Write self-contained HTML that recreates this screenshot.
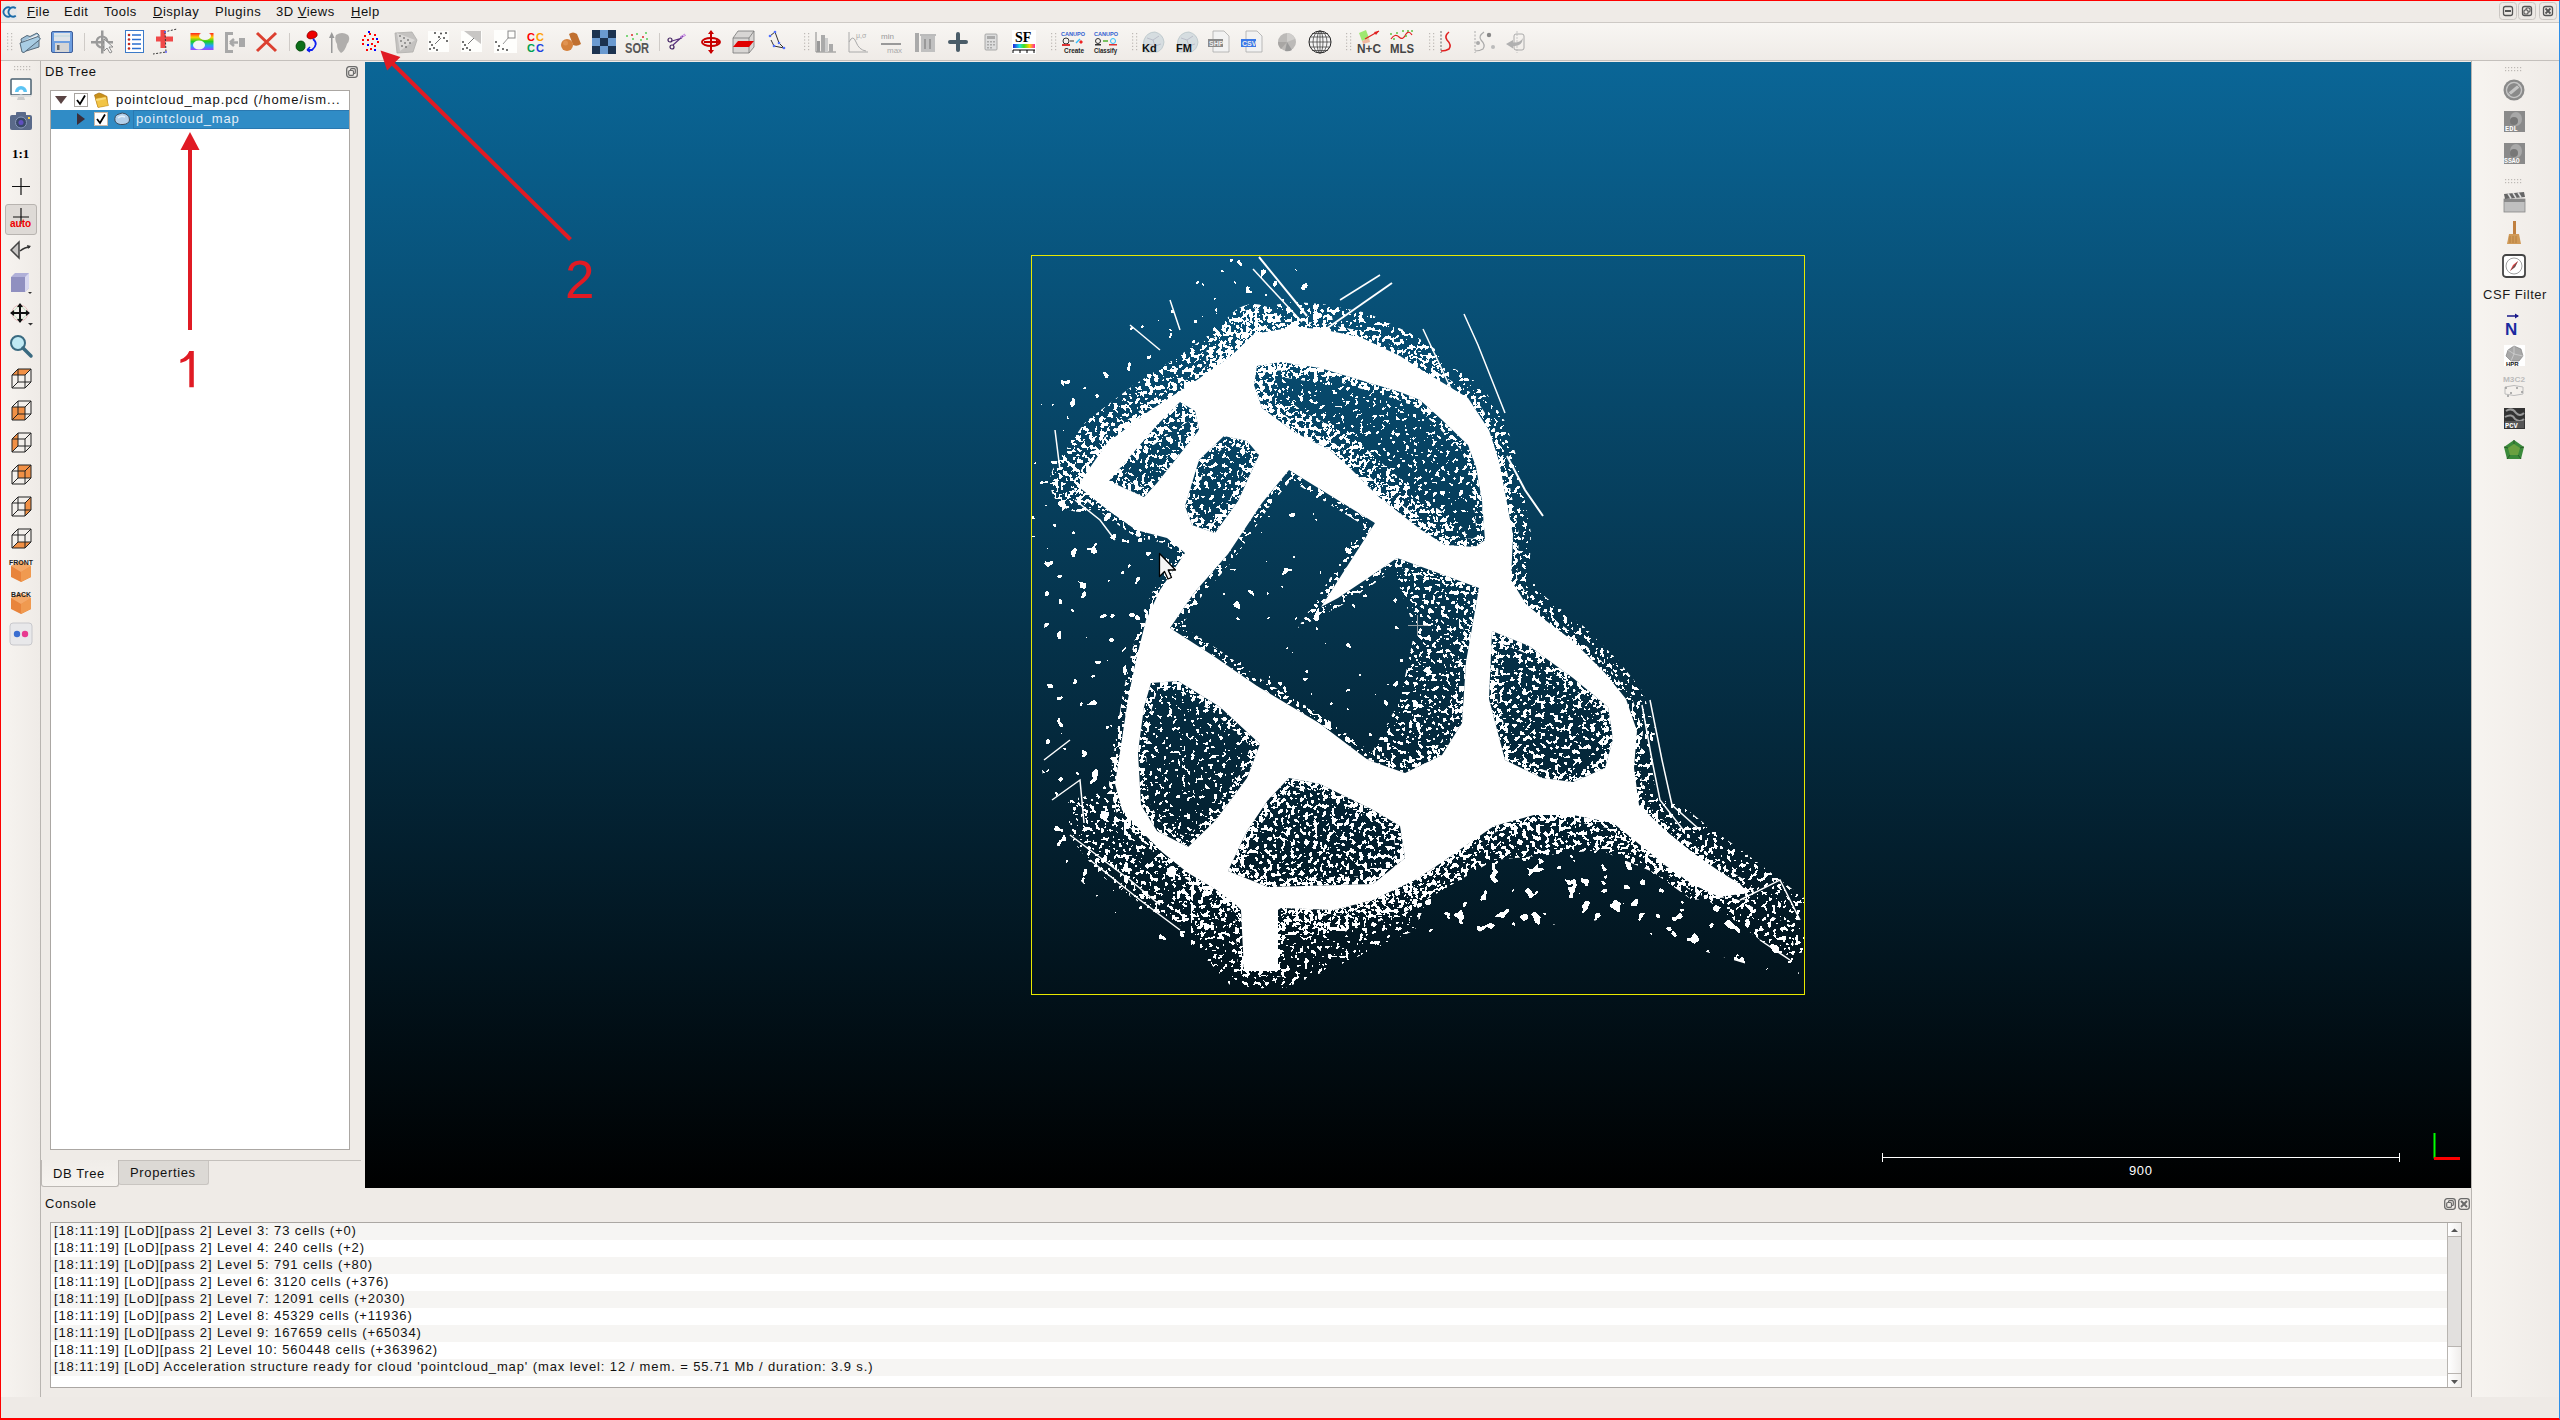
<!DOCTYPE html><html><head><meta charset="utf-8"><style>
*{margin:0;padding:0;box-sizing:border-box}
html,body{width:2560px;height:1420px;overflow:hidden;background:#efebe7;font-family:"Liberation Sans",sans-serif;font-size:13px;color:#111}
.a{position:absolute}
#frame{left:0;top:0;width:2560px;height:1420px;border-top:1px solid #ff0000;border-left:1px solid #ff0000;border-bottom:2px solid #ff0000;border-right:1px solid #2f8fe8;pointer-events:none;z-index:50}
#menubar{left:1px;top:1px;width:2558px;height:22px;background:#efebe7;border-bottom:1px solid #cdc9c5}
.menu{top:4px;font-size:13px;letter-spacing:0.5px;color:#111}
#toolbar{left:1px;top:23px;width:2558px;height:38px;background:linear-gradient(#f8f6f3,#efebe7);border-bottom:1px solid #c4c0bc}
#ltool{left:1px;top:61px;width:39px;height:1336px;background:linear-gradient(90deg,#f7f4f0,#efebe7)}
#lsep{left:40px;top:61px;width:1px;height:1336px;background:#b9b5b1}
#rtool{left:2472px;top:61px;width:87px;height:1336px;background:linear-gradient(90deg,#f7f4f0,#efebe7)}
#rsep{left:2471px;top:61px;width:1px;height:1336px;background:#b9b5b1}
#view{left:365px;top:62px;width:2106px;height:1126px;background:linear-gradient(#0a6697,#000000);overflow:hidden}
#tree{left:50px;top:90px;width:300px;height:1060px;background:#fff;border:1px solid #aba7a3}
#console{left:50px;top:1222px;width:2412px;height:166px;background:#fff;border:1px solid #aba7a3;overflow:hidden}
.row{position:absolute;left:0;width:2396px;height:17px}
.ctext{position:absolute;left:3px;top:0px;white-space:pre;font-size:13px;color:#111}
#status{left:1px;top:1397px;width:2558px;height:21px;background:#eeeae6}
.dockbtn{width:11px;height:11px;border:1.3px solid #6a6a6a;border-radius:2.5px}
</style></head><body><div id="frame" class="a"></div><div id="menubar" class="a"></div><div id="toolbar" class="a"></div><div id="ltool" class="a"></div><div id="lsep" class="a"></div><div id="rtool" class="a"></div><div id="rsep" class="a"></div><div id="status" class="a"></div>
<div class="a menu" style="left:27px"><u>F</u>ile</div>
<div class="a menu" style="left:64px">Edit</div>
<div class="a menu" style="left:104px">Tools</div>
<div class="a menu" style="left:153px"><u>D</u>isplay</div>
<div class="a menu" style="left:215px">Plugins</div>
<div class="a menu" style="left:276px">3D <u>V</u>iews</div>
<div class="a menu" style="left:351px"><u>H</u>elp</div>
<div class="a" style="left:2px;top:4px;width:15px;height:16px;background:#e6e8ea"></div>
<svg class="a" style="left:2px;top:4px" width="16" height="16" viewBox="0 0 16 16"><path d="M8.8 4.2 A4.6 4.6 0 1 0 8.8 11.8" fill="none" stroke="#1a6aa8" stroke-width="1.8"/><path d="M13.8 4.2 A4.6 4.6 0 1 0 13.8 11.8" fill="none" stroke="#1a6aa8" stroke-width="1.8"/></svg>
<svg class="a" style="left:2496px;top:1px" width="63" height="20" viewBox="2496 1 63 20">
 <rect x="2499.5" y="2.5" width="17" height="17" rx="3" fill="#ede9e5" stroke="#cbc7c3"/>
 <rect x="2503.5" y="6.5" width="9" height="9" rx="2" fill="none" stroke="#555" stroke-width="1.3"/><rect x="2505" y="10" width="6" height="2" fill="#555"/>
 <rect x="2518.5" y="2.5" width="17" height="17" rx="3" fill="#ede9e5" stroke="#cbc7c3"/>
 <rect x="2522.5" y="6.5" width="9" height="9" rx="2" fill="none" stroke="#555" stroke-width="1.3"/><rect x="2526" y="8" width="4" height="4" rx="1" fill="none" stroke="#555" stroke-width="1.1"/><rect x="2524" y="10" width="4" height="4" rx="1" fill="#ede9e5" stroke="#555" stroke-width="1.1"/>
 <rect x="2539.5" y="2.5" width="17" height="17" rx="3" fill="#ede9e5" stroke="#cbc7c3"/>
 <rect x="2543.5" y="6.5" width="9" height="9" rx="2" fill="none" stroke="#555" stroke-width="1.3"/><path d="M2545.5 8.5L2550.5 13.5M2550.5 8.5L2545.5 13.5" stroke="#555" stroke-width="1.8"/>
</svg>
<svg class="a" style="left:0;top:0;z-index:3" width="1540" height="62" viewBox="0 0 1540 62"><rect x="7" y="33.0" width="1.2" height="1.2" fill="#bdb9b5"/><rect x="7" y="36.2" width="1.2" height="1.2" fill="#bdb9b5"/><rect x="7" y="39.4" width="1.2" height="1.2" fill="#bdb9b5"/><rect x="7" y="42.6" width="1.2" height="1.2" fill="#bdb9b5"/><rect x="7" y="45.8" width="1.2" height="1.2" fill="#bdb9b5"/><rect x="7" y="49.0" width="1.2" height="1.2" fill="#bdb9b5"/><rect x="11" y="33.0" width="1.2" height="1.2" fill="#bdb9b5"/><rect x="11" y="36.2" width="1.2" height="1.2" fill="#bdb9b5"/><rect x="11" y="39.4" width="1.2" height="1.2" fill="#bdb9b5"/><rect x="11" y="42.6" width="1.2" height="1.2" fill="#bdb9b5"/><rect x="11" y="45.8" width="1.2" height="1.2" fill="#bdb9b5"/><rect x="11" y="49.0" width="1.2" height="1.2" fill="#bdb9b5"/><rect x="804" y="33.0" width="1.2" height="1.2" fill="#bdb9b5"/><rect x="804" y="36.2" width="1.2" height="1.2" fill="#bdb9b5"/><rect x="804" y="39.4" width="1.2" height="1.2" fill="#bdb9b5"/><rect x="804" y="42.6" width="1.2" height="1.2" fill="#bdb9b5"/><rect x="804" y="45.8" width="1.2" height="1.2" fill="#bdb9b5"/><rect x="804" y="49.0" width="1.2" height="1.2" fill="#bdb9b5"/><rect x="808" y="33.0" width="1.2" height="1.2" fill="#bdb9b5"/><rect x="808" y="36.2" width="1.2" height="1.2" fill="#bdb9b5"/><rect x="808" y="39.4" width="1.2" height="1.2" fill="#bdb9b5"/><rect x="808" y="42.6" width="1.2" height="1.2" fill="#bdb9b5"/><rect x="808" y="45.8" width="1.2" height="1.2" fill="#bdb9b5"/><rect x="808" y="49.0" width="1.2" height="1.2" fill="#bdb9b5"/><rect x="1051" y="33.0" width="1.2" height="1.2" fill="#bdb9b5"/><rect x="1051" y="36.2" width="1.2" height="1.2" fill="#bdb9b5"/><rect x="1051" y="39.4" width="1.2" height="1.2" fill="#bdb9b5"/><rect x="1051" y="42.6" width="1.2" height="1.2" fill="#bdb9b5"/><rect x="1051" y="45.8" width="1.2" height="1.2" fill="#bdb9b5"/><rect x="1051" y="49.0" width="1.2" height="1.2" fill="#bdb9b5"/><rect x="1055" y="33.0" width="1.2" height="1.2" fill="#bdb9b5"/><rect x="1055" y="36.2" width="1.2" height="1.2" fill="#bdb9b5"/><rect x="1055" y="39.4" width="1.2" height="1.2" fill="#bdb9b5"/><rect x="1055" y="42.6" width="1.2" height="1.2" fill="#bdb9b5"/><rect x="1055" y="45.8" width="1.2" height="1.2" fill="#bdb9b5"/><rect x="1055" y="49.0" width="1.2" height="1.2" fill="#bdb9b5"/><rect x="1132" y="33.0" width="1.2" height="1.2" fill="#bdb9b5"/><rect x="1132" y="36.2" width="1.2" height="1.2" fill="#bdb9b5"/><rect x="1132" y="39.4" width="1.2" height="1.2" fill="#bdb9b5"/><rect x="1132" y="42.6" width="1.2" height="1.2" fill="#bdb9b5"/><rect x="1132" y="45.8" width="1.2" height="1.2" fill="#bdb9b5"/><rect x="1132" y="49.0" width="1.2" height="1.2" fill="#bdb9b5"/><rect x="1136" y="33.0" width="1.2" height="1.2" fill="#bdb9b5"/><rect x="1136" y="36.2" width="1.2" height="1.2" fill="#bdb9b5"/><rect x="1136" y="39.4" width="1.2" height="1.2" fill="#bdb9b5"/><rect x="1136" y="42.6" width="1.2" height="1.2" fill="#bdb9b5"/><rect x="1136" y="45.8" width="1.2" height="1.2" fill="#bdb9b5"/><rect x="1136" y="49.0" width="1.2" height="1.2" fill="#bdb9b5"/><rect x="1346" y="33.0" width="1.2" height="1.2" fill="#bdb9b5"/><rect x="1346" y="36.2" width="1.2" height="1.2" fill="#bdb9b5"/><rect x="1346" y="39.4" width="1.2" height="1.2" fill="#bdb9b5"/><rect x="1346" y="42.6" width="1.2" height="1.2" fill="#bdb9b5"/><rect x="1346" y="45.8" width="1.2" height="1.2" fill="#bdb9b5"/><rect x="1346" y="49.0" width="1.2" height="1.2" fill="#bdb9b5"/><rect x="1350" y="33.0" width="1.2" height="1.2" fill="#bdb9b5"/><rect x="1350" y="36.2" width="1.2" height="1.2" fill="#bdb9b5"/><rect x="1350" y="39.4" width="1.2" height="1.2" fill="#bdb9b5"/><rect x="1350" y="42.6" width="1.2" height="1.2" fill="#bdb9b5"/><rect x="1350" y="45.8" width="1.2" height="1.2" fill="#bdb9b5"/><rect x="1350" y="49.0" width="1.2" height="1.2" fill="#bdb9b5"/><rect x="1429" y="33.0" width="1.2" height="1.2" fill="#bdb9b5"/><rect x="1429" y="36.2" width="1.2" height="1.2" fill="#bdb9b5"/><rect x="1429" y="39.4" width="1.2" height="1.2" fill="#bdb9b5"/><rect x="1429" y="42.6" width="1.2" height="1.2" fill="#bdb9b5"/><rect x="1429" y="45.8" width="1.2" height="1.2" fill="#bdb9b5"/><rect x="1429" y="49.0" width="1.2" height="1.2" fill="#bdb9b5"/><rect x="1433" y="33.0" width="1.2" height="1.2" fill="#bdb9b5"/><rect x="1433" y="36.2" width="1.2" height="1.2" fill="#bdb9b5"/><rect x="1433" y="39.4" width="1.2" height="1.2" fill="#bdb9b5"/><rect x="1433" y="42.6" width="1.2" height="1.2" fill="#bdb9b5"/><rect x="1433" y="45.8" width="1.2" height="1.2" fill="#bdb9b5"/><rect x="1433" y="49.0" width="1.2" height="1.2" fill="#bdb9b5"/><rect x="84" y="33" width="1" height="18" fill="#cfcbc7"/><rect x="289" y="33" width="1" height="18" fill="#cfcbc7"/><rect x="659" y="33" width="1" height="18" fill="#cfcbc7"/><g transform="translate(18,30)"><path d="M3 9 L9 5.5 L12 6.5 L19 3 L21 5 L21 17 L5 22 Z" fill="#9dbfd6" stroke="#55697a" stroke-width="1"/><path d="M6 11 L19 4.5 L20.5 8 L8 14 Z" fill="#f2f2f2"/><path d="M2 13 L20 6.5 L22.5 9 L6 22.5 L4 22 Z" fill="#a9cde4" stroke="#55697a" stroke-width="1"/></g><g transform="translate(50,30)"><rect x="1.5" y="1.5" width="21" height="21" rx="1.5" fill="#6d9ee0" stroke="#3f5f9a" stroke-width="1"/><rect x="4" y="3" width="16" height="8" fill="#dfe3e8"/><rect x="4" y="5.5" width="16" height="1" fill="#b8d8e0"/><rect x="5" y="13" width="14" height="9" fill="#d5d5d5"/><rect x="7" y="15" width="2.5" height="5" fill="#666"/></g><g transform="translate(91,30)"><circle cx="11" cy="12" r="5.5" fill="none" stroke="#9a9a9a" stroke-width="2.2"/><rect x="10" y="0.5" width="2.5" height="23" fill="#9a9a9a"/><rect x="0" y="11" width="22" height="2.5" fill="#9a9a9a"/><path d="M13 9 L13 21 L16 18 L19 23 L21 22 L18 17 L22 17 Z" fill="#f4f4f4" stroke="#777" stroke-width="0.8"/></g><g transform="translate(124,30)"><rect x="1.5" y="0.5" width="18" height="22" fill="#fff" stroke="#3c7ac8" stroke-width="1"/><g fill="#c0281e"><circle cx="5" cy="5" r="1.3"/><circle cx="5" cy="9.5" r="1.3"/><circle cx="5" cy="14" r="1.3"/><circle cx="5" cy="18.5" r="1.3"/></g><g stroke="#2a6fd0" stroke-width="1.5"><path d="M8 5H17M8 9.5H17M8 14H17M8 18.5H17"/></g></g><g transform="translate(156,30)"><rect x="4.5" y="0" width="5" height="18" fill="#f04848"/><rect x="0" y="6.5" width="17" height="5" fill="#f04848"/><path d="M8 2 L21 -1 M9 2 L10 22 L-3 24" fill="none" stroke="#333" stroke-width="1" stroke-dasharray="2 1.5"/><circle cx="9" cy="2" r="1" fill="#66f"/><circle cx="10" cy="22" r="1" fill="#66f"/></g><g transform="translate(190,30)"><defs><linearGradient id="rb" x1="0" y1="0" x2="0" y2="1"><stop offset="0" stop-color="#ff2020"/><stop offset=".25" stop-color="#ffd000"/><stop offset=".5" stop-color="#20d020"/><stop offset=".75" stop-color="#20a0ff"/><stop offset="1" stop-color="#a040ff"/></linearGradient></defs><rect x="0.5" y="3" width="23" height="17" fill="url(#rb)"/><ellipse cx="15" cy="6" rx="6" ry="4" fill="#f4f4f4"/><ellipse cx="9" cy="15" rx="6" ry="4.5" fill="#f4f4f4"/></g><g transform="translate(224,30)"><path d="M1 2H9V5H4V20H9V23H1Z" fill="#a8a8a8"/><rect x="15" y="8" width="6" height="9" fill="#a8a8a8"/><path d="M6 12.5H14M6 12.5L10 9M6 12.5L10 16" stroke="#a8a8a8" stroke-width="2.5" fill="none"/></g><g transform="translate(255,30)"><path d="M2 3L21 21M21 3L2 21" stroke="#dc4030" stroke-width="3" fill="none"/></g><g transform="translate(295,30)"><path d="M1 15 Q3 10 7 11 Q11 12 10 18 Q8 22 4 21 Q0 19 1 15Z" fill="#0c6e18" stroke="#053a0a" stroke-width="0.6"/><path d="M12 5 Q14 0 19 1 Q23 2 22 6 Q20 9 15 9 Q11 8 12 5Z" fill="#ee0000" stroke="#600" stroke-width="0.6"/><path d="M18 9 Q24 14 17 20 L12 20" fill="none" stroke="#1020f0" stroke-width="1.8"/><path d="M12 20 L15 17 M12 20 L15 22" stroke="#1020f0" stroke-width="1.5"/></g><g transform="translate(329,30)"><rect x="2" y="4" width="1.5" height="19" fill="#999"/><path d="M0 8 L2.7 2 L5.5 8Z" fill="#999"/><path d="M7 5 Q13 1 19 5 Q22 9 18 14 Q16 21 12 23 Q8 20 8 14 Q5 9 7 5Z" fill="#b0aeac"/></g><g transform="translate(361,30)"><g fill="#ff0000"><rect x="3" y="5" width="2" height="2"/><rect x="8" y="3" width="2" height="2"/><rect x="13" y="4" width="2" height="2"/><rect x="1" y="9" width="2" height="2"/><rect x="6" y="9" width="2" height="2"/><rect x="11" y="8" width="2" height="2"/><rect x="16" y="11" width="2" height="2"/><rect x="1" y="13" width="2" height="2"/><rect x="10" y="13" width="2" height="2"/><rect x="13" y="15" width="2" height="2"/><rect x="5" y="19" width="2" height="2"/><rect x="9" y="18" width="2" height="2"/></g><g fill="#0000ff"><rect x="7" y="1" width="2" height="2"/><rect x="15" y="8" width="2" height="2"/><rect x="6" y="14" width="2" height="2"/><rect x="13" y="19" width="2" height="2"/></g></g><g transform="translate(395,30)"><path d="M0 3 L17 2 L22 10 L18 22 L2 23 Z" fill="#c4c2c0" stroke="#b0aeac" stroke-width="0.8"/><path d="M2 3 L20 10 L5 21" fill="#dcdad8"/><g fill="#444"><circle cx="5" cy="6" r=".8"/><circle cx="9" cy="8" r=".8"/><circle cx="13" cy="10" r=".8"/><circle cx="6" cy="11" r=".8"/><circle cx="10" cy="13" r=".8"/><circle cx="15" cy="13" r=".8"/><circle cx="7" cy="16" r=".8"/><circle cx="11" cy="17" r=".8"/></g></g><g transform="translate(428,30)"><rect x="0" y="1" width="21" height="21" fill="#fefefc"/><g fill="#444"><circle cx="7" cy="3" r="1"/><circle cx="13" cy="3.5" r="1"/><circle cx="18" cy="3" r="1"/><circle cx="11" cy="7" r="1"/><circle cx="16" cy="8" r="1"/><circle cx="19" cy="11" r="1"/><circle cx="2" cy="12" r="1"/><circle cx="4" cy="15" r="1"/><circle cx="2" cy="19" r="1"/><circle cx="6" cy="18" r="1"/><circle cx="9" cy="20" r="1"/></g><path d="M7 14L13 8" stroke="#777" stroke-width="1"/></g><g transform="translate(461,30)"><rect x="0" y="1" width="21" height="21" fill="#fefefc"/><path d="M3 1H20V14Z" fill="#c8c6c4"/><g fill="#444"><circle cx="2" cy="12" r="1"/><circle cx="4" cy="15" r="1"/><circle cx="2" cy="19" r="1"/><circle cx="6" cy="18" r="1"/><circle cx="9" cy="20" r="1"/></g><path d="M7 14L13 8" stroke="#777" stroke-width="1"/></g><g transform="translate(494,30)"><rect x="0" y="0" width="23" height="23" fill="#fefefc"/><rect x="14" y="1" width="7" height="7" fill="none" stroke="#888" stroke-width="1"/><g fill="#444"><circle cx="2" cy="12" r="1"/><circle cx="5" cy="16" r="1"/><circle cx="4" cy="20" r="1"/><circle cx="9" cy="19" r="1"/><circle cx="13" cy="20" r="1"/></g><path d="M9 14L15 7" stroke="#999" stroke-width="1"/></g><g transform="translate(527,30)"><g font-family="Liberation Sans" font-weight="bold" font-size="11"><text x="0" y="11" fill="#ff0000">C</text><text x="9" y="11" fill="#ffa000">C</text><text x="0" y="22" fill="#00a050">C</text><text x="9" y="22" fill="#2040e0">C</text></g></g><g transform="translate(559,30)"><path d="M10 4 Q14 1 18 4 L22 14 Q18 17 14 15Z" fill="#c07030"/><circle cx="8" cy="15" r="6" fill="#d4813c"/><circle cx="6.5" cy="13" r="2.5" fill="#e8a060" opacity=".6"/></g><g transform="translate(592,30)"><rect x="0" y="0" width="24" height="24" fill="#6a9ad0"/><g fill="#1c3350"><rect x="0" y="0" width="8" height="8"/><rect x="16" y="0" width="8" height="8"/><rect x="8" y="8" width="8" height="8"/><rect x="0" y="16" width="8" height="8"/><rect x="16" y="16" width="8" height="8"/></g></g><g transform="translate(625,30)"><text x="0" y="23" font-family="Liberation Sans" font-weight="bold" font-size="14" fill="#555" textLength="24" lengthAdjust="spacingAndGlyphs">SOR</text><g fill="#5c5"><circle cx="2" cy="6" r="1"/><circle cx="12" cy="4" r="1"/><circle cx="21" cy="3" r="1"/><circle cx="8" cy="9" r="1"/><circle cx="16" cy="10" r="1"/><circle cx="22" cy="9" r="1"/></g><g stroke="#d33" stroke-width="0.8"><path d="M6 4l2 2M8 4l-2 2M17 6l2 2M19 6l-2 2"/></g></g><g transform="translate(666,30)"><circle cx="4" cy="10" r="2" fill="none" stroke="#402060" stroke-width="1.2"/><circle cx="6" cy="17" r="2" fill="none" stroke="#402060" stroke-width="1.2"/><path d="M6 11 L16 8 M7 15 L17 6" stroke="#5a3080" stroke-width="1.2"/><path d="M15 8L20 5M14 7 L19 4" stroke="#c080e0" stroke-width="1"/></g><g transform="translate(699,30)"><path d="M12 1V23M5 12H19" stroke="#c80000" stroke-width="2"/><path d="M12 0L9 4H15ZM12 24L9 20H15Z" fill="#c80000"/><ellipse cx="12" cy="12" rx="9" ry="4" fill="none" stroke="#c80000" stroke-width="2"/><path d="M21 12 L17 9 V15Z" fill="#c80000"/></g><g transform="translate(731,30)"><path d="M2 8 L7 1 L23 1 L23 17 L18 23 L2 23 Z" fill="#d8d6d4" stroke="#777" stroke-width="0.8"/><path d="M2 8H18V23M18 8L23 1" fill="none" stroke="#777" stroke-width="0.8"/><path d="M2 17 L7 11 L23 11 L18 17Z" fill="#e00000"/></g><g transform="translate(766,30)"><path d="M4 6 L9 2 L13 13 L18 18 L8 16 L5 10" fill="none" stroke="#333" stroke-width="1"/><g fill="#5070ff"><circle cx="4" cy="6" r="1.3"/><circle cx="9" cy="2" r="1.3"/><circle cx="13" cy="13" r="1.3"/><circle cx="18" cy="18" r="1.3"/><circle cx="8" cy="16" r="1.3"/></g></g><g transform="translate(814,30)"><path d="M2 2V22H22" fill="none" stroke="#888" stroke-width="1"/><rect x="3" y="11" width="3" height="11" fill="#999"/><rect x="7" y="5" width="4" height="17" fill="#aaa"/><rect x="11" y="8" width="3" height="14" fill="#ccc"/><rect x="15" y="14" width="4" height="8" fill="#aaa"/></g><g transform="translate(847,30)"><path d="M2 2V22H21" fill="none" stroke="#aaa" stroke-width="1"/><path d="M2 12 Q6 4 9 12 Q12 20 19 21" fill="none" stroke="#aaa" stroke-width="1"/><text x="9" y="8" font-size="7" fill="#aaa" font-family="Liberation Sans">μ,σ</text></g><g transform="translate(880,30)"><text x="1" y="9" font-size="8" fill="#999" font-family="Liberation Sans">min</text><text x="7" y="23" font-size="8" fill="#aaa" font-family="Liberation Sans">max</text><path d="M1 14H21" stroke="#999" stroke-width="2"/></g><g transform="translate(914,30)"><rect x="1" y="3" width="4" height="19" fill="#aaa"/><path d="M6 4H22V6H6Z" fill="#bbb"/><rect x="7" y="6" width="14" height="16" fill="#c0c0c0"/><rect x="10" y="9" width="2" height="10" fill="#999"/><rect x="15" y="9" width="2" height="10" fill="#999"/></g><g transform="translate(946,30)"><path d="M12 4V20M4 12H20" stroke="#4a5c68" stroke-width="4" stroke-linecap="round"/></g><g transform="translate(979,30)"><rect x="6" y="4" width="12" height="16" rx="1" fill="#ddd" stroke="#999" stroke-width="0.8"/><rect x="8" y="6" width="8" height="3" fill="#aaa"/><g fill="#aaa"><rect x="8" y="11" width="2" height="1.5"/><rect x="11" y="11" width="2" height="1.5"/><rect x="14" y="11" width="2" height="1.5"/><rect x="8" y="14" width="2" height="1.5"/><rect x="11" y="14" width="2" height="1.5"/><rect x="14" y="14" width="2" height="1.5"/><rect x="8" y="17" width="2" height="1.5"/><rect x="11" y="17" width="2" height="1.5"/></g></g><g transform="translate(1012,30)"><defs><linearGradient id="sfg"><stop offset="0" stop-color="#2020e0"/><stop offset=".3" stop-color="#20e0e0"/><stop offset=".5" stop-color="#40e020"/><stop offset=".75" stop-color="#ffd000"/><stop offset="1" stop-color="#ff20a0"/></linearGradient></defs><rect x="0" y="0" width="24" height="24" fill="#fff"/><text x="3" y="12" font-family="Liberation Serif" font-weight="bold" font-size="14" fill="#000">SF</text><rect x="1" y="14" width="22" height="4" fill="url(#sfg)"/><path d="M1 20H23M1 20V23M8 20V23M15 20V23M22 20V23" stroke="#000" stroke-width="1"/></g><g transform="translate(1061,30)"><text x="0" y="6" font-family="Liberation Sans" font-weight="bold" font-size="6" fill="#3060d0" textLength="24" lengthAdjust="spacingAndGlyphs">CANUPO</text><circle cx="5" cy="11" r="3" fill="none" stroke="#333" stroke-width="1"/><path d="M9 11H13" stroke="#333"/><path d="M15 13 L19 9" stroke="#30c0ff" stroke-width="1.5"/><path d="M20 10 L22 12 L20 14 L18 12Z" fill="#e22"/><rect x="1" y="14" width="8" height="2" fill="#d33"/><text x="3" y="23" font-family="Liberation Sans" font-weight="bold" font-size="7" fill="#222" textLength="20" lengthAdjust="spacingAndGlyphs">Create</text></g><g transform="translate(1094,30)"><text x="0" y="6" font-family="Liberation Sans" font-weight="bold" font-size="6" fill="#3060d0" textLength="24" lengthAdjust="spacingAndGlyphs">CANUPO</text><circle cx="4" cy="11" r="2.5" fill="none" stroke="#333" stroke-width="1"/><path d="M9 11H14" stroke="#50b030" stroke-width="1.5"/><circle cx="19" cy="11" r="2.5" fill="none" stroke="#30c0ff" stroke-width="1"/><rect x="15" y="14" width="8" height="1.5" fill="#d33"/><rect x="1" y="14" width="6" height="1.5" fill="#333"/><text x="0" y="23" font-family="Liberation Sans" font-weight="bold" font-size="7" fill="#222" textLength="23" lengthAdjust="spacingAndGlyphs">Classify</text></g><g transform="translate(1141,30)"><path d="M3 10 Q6 2 14 2 Q22 4 23 12 Q22 20 16 22 L4 22 Q1 16 3 10Z" fill="#d6dde0" stroke="#b8c4c8" stroke-width="0.8"/><path d="M6 8L12 10L18 6M12 10L14 16L20 14M8 14L14 16" fill="none" stroke="#aab" stroke-width="0.6"/><text x="1" y="22" font-family="Liberation Sans" font-weight="bold" font-size="11" fill="#111">Kd</text></g><g transform="translate(1175,30)"><path d="M3 10 Q6 2 14 2 Q22 4 23 12 Q22 20 16 22 L4 22 Q1 16 3 10Z" fill="#d6dde0" stroke="#b8c4c8" stroke-width="0.8"/><path d="M6 8L12 10L18 6M12 10L14 16L20 14M8 14L14 16" fill="none" stroke="#aab" stroke-width="0.6"/><text x="1" y="22" font-family="Liberation Sans" font-weight="bold" font-size="11" fill="#111">FM</text></g><g transform="translate(1208,30)"><path d="M5 1 H16 L21 6 V22 H5 Z" fill="#f2f2f2" stroke="#aaa" stroke-width="0.8"/><rect x="0" y="9" width="15" height="8" fill="#8a8a8a"/><text x="1" y="16" font-family="Liberation Sans" font-weight="bold" font-size="7" fill="#eee">SHP</text></g><g transform="translate(1241,30)"><path d="M5 1 H16 L21 6 V22 H5 Z" fill="#f2f2f2" stroke="#aaa" stroke-width="0.8"/><rect x="0" y="9" width="15" height="8" fill="#3a78e8"/><text x="1" y="16" font-family="Liberation Sans" font-weight="bold" font-size="7" fill="#eee">CSV</text></g><g transform="translate(1275,30)"><circle cx="12" cy="12" r="9" fill="#bcbab8"/><path d="M12 12L12 3A9 9 0 0 1 20 9Z" fill="#d0cecc"/><path d="M12 12L6 19A9 9 0 0 1 3 12Z" fill="#a8a6a4"/><path d="M12 12L17 20A9 9 0 0 1 10 21Z" fill="#999"/></g><g transform="translate(1308,30)"><circle cx="12" cy="12" r="11" fill="#f4f4f4" stroke="#222" stroke-width="1"/><g fill="none" stroke="#333" stroke-width="0.7"><ellipse cx="12" cy="12" rx="3" ry="11"/><ellipse cx="12" cy="12" rx="7" ry="11"/><path d="M1 12H23M2 7H22M2 17H22M4 3.5H20M4 20.5H20M12 1V23"/></g></g><g transform="translate(1357,30)"><path d="M2 3 L9 0 L12 8 L5 11Z" fill="#9ee870"/><path d="M5 11 L12 8 L13 12 L6 14Z" fill="#f0b8a0"/><path d="M8 9 L22 1" stroke="#e02020" stroke-width="1.3"/><path d="M22 1 L17 2 L19 5Z" fill="#e02020"/><text x="0" y="23" font-family="Liberation Sans" font-weight="bold" font-size="13" fill="#444" textLength="24" lengthAdjust="spacingAndGlyphs">N+C</text></g><g transform="translate(1390,30)"><path d="M1 9 Q5 3 9 7 Q13 11 16 4 Q19 0 22 5" fill="none" stroke="#e02020" stroke-width="1.2"/><g fill="#60c040"><circle cx="1" cy="4" r="1"/><circle cx="7" cy="3" r="1"/><circle cx="13" cy="1" r="1"/><circle cx="18" cy="1" r="1"/><circle cx="22" cy="1" r="1"/><circle cx="4" cy="9" r="1"/><circle cx="16" cy="6" r="1"/></g><text x="0" y="23" font-family="Liberation Sans" font-weight="bold" font-size="13" fill="#444" textLength="24" lengthAdjust="spacingAndGlyphs">MLS</text></g><g transform="translate(1438,30)"><path d="M3 1V23" stroke="#444" stroke-width="0.8" stroke-dasharray="2 1.5"/><path d="M11 2 Q6 6 9 10 Q14 15 11 19 Q8 21 3 21" fill="none" stroke="#e02020" stroke-width="1.6"/></g><g transform="translate(1472,30)"><path d="M3 1V23" stroke="#999" stroke-width="0.8" stroke-dasharray="2 1.5"/><path d="M12 2 Q6 6 9 10 Q14 15 11 19 Q8 21 3 21" fill="none" stroke="#aaa" stroke-width="1.2"/><circle cx="17" cy="5" r="2.2" fill="#888"/><circle cx="6" cy="13" r="2" fill="#aaa"/><circle cx="21" cy="17" r="2" fill="#bbb"/></g><g transform="translate(1505,30)"><path d="M12 1V23" stroke="#bbb" stroke-width="0.8" stroke-dasharray="2 1"/><rect x="9" y="4" width="10" height="16" rx="2" fill="none" stroke="#aaa" stroke-width="1"/><path d="M1 14 L8 10 V12.5 Q15 13 18 8 Q17 17 8 16 V18.5Z" fill="#b0b0b0"/></g></svg><svg class="a" style="left:0;top:61px;z-index:3" width="41" height="600" viewBox="0 61 41 600"><rect x="14" y="66" width="1.2" height="1.2" fill="#bdb9b5"/><rect x="14" y="69" width="1.2" height="1.2" fill="#bdb9b5"/><rect x="17" y="66" width="1.2" height="1.2" fill="#bdb9b5"/><rect x="17" y="69" width="1.2" height="1.2" fill="#bdb9b5"/><rect x="20" y="66" width="1.2" height="1.2" fill="#bdb9b5"/><rect x="20" y="69" width="1.2" height="1.2" fill="#bdb9b5"/><rect x="23" y="66" width="1.2" height="1.2" fill="#bdb9b5"/><rect x="23" y="69" width="1.2" height="1.2" fill="#bdb9b5"/><rect x="26" y="66" width="1.2" height="1.2" fill="#bdb9b5"/><rect x="26" y="69" width="1.2" height="1.2" fill="#bdb9b5"/><rect x="29" y="66" width="1.2" height="1.2" fill="#bdb9b5"/><rect x="29" y="69" width="1.2" height="1.2" fill="#bdb9b5"/><rect x="5.5" y="204.5" width="31" height="30" rx="2.5" fill="#dedad6" stroke="#b8b4b0" stroke-width="1"/><g transform="translate(9,207)"><path d="M12 1V17M4 10H20" stroke="#111" stroke-width="1.2"/><text x="1" y="20" font-family="Liberation Sans" font-weight="bold" font-size="10" fill="#ee0000">auto</text></g><g transform="translate(9,78)"><rect x="2" y="1" width="20" height="16" rx="1" fill="#fff" stroke="#4a6070" stroke-width="1.5"/><path d="M6 14 A6 6 0 0 1 18 14 Z" fill="#5cc4f4"/><circle cx="12" cy="14" r="2.5" fill="#fff"/><rect x="2" y="17" width="20" height="2" fill="#ddd"/><path d="M9 19H15L16 22H8Z" fill="#ccc"/></g><g transform="translate(9,109)"><rect x="1" y="6" width="22" height="15" rx="2" fill="#5a6a8a"/><rect x="7" y="3" width="10" height="4" rx="1" fill="#5a6a8a"/><circle cx="12" cy="13.5" r="5.5" fill="#3a4a6a" stroke="#8a9aba" stroke-width="1"/><circle cx="12" cy="13.5" r="2.5" fill="#6050c0"/><rect x="19" y="8" width="2" height="2" fill="#ffd040"/></g><g transform="translate(9,141)"><text x="3" y="17" font-family="Liberation Serif" font-weight="bold" font-size="13" fill="#000">1:1</text></g><g transform="translate(9,174)"><path d="M12 4V21M3 12.5H21" stroke="#111" stroke-width="1.2"/></g><g transform="translate(9,238)"><path d="M2 12 L10 4 V20 Z" fill="#c8c6c4" stroke="#444" stroke-width="1.5"/><path d="M11 13 Q16 9 21 9" fill="none" stroke="#333" stroke-width="1.5"/><path d="M22 8 L18 7 L19 11Z" fill="#333"/></g><g transform="translate(9,271)"><path d="M2 6 L6 2 H20 V17 L16 21 H2 Z" fill="#b0b0d8"/><path d="M2 6H16V21H2Z" fill="#9090c0"/><path d="M16 6L20 2V17L16 21Z" fill="#d8d8f0"/><path d="M19 21 L23 21 L21 23Z" fill="#333"/></g><g transform="translate(9,302)"><circle cx="11" cy="11" r="8" fill="none" stroke="#e8c0c0" stroke-width="1"/><circle cx="11" cy="11" r="6" fill="none" stroke="#c0e0c0" stroke-width="1"/><path d="M11 2V20M2 11H20" stroke="#111" stroke-width="2"/><path d="M11 1L8 5H14ZM11 21L8 17H14ZM1 11L5 8V14ZM21 11L17 8V14Z" fill="#111"/><path d="M19 21H24L21.5 23.5Z" fill="#333"/></g><g transform="translate(9,334)"><circle cx="9" cy="9" r="7" fill="#c0eaf4" stroke="#3a6a80" stroke-width="2"/><path d="M14 14 L22 22" stroke="#3a6a80" stroke-width="3.5" stroke-linecap="round"/></g><g transform="translate(9,366)"><g transform="translate(2,2)"><path d="M1 7L7 1H20L14 7Z" fill="#f08a3c" opacity="0.95"/><path d="M1 7H14V20H1Z M7 1H20V14H7Z M1 7L7 1 M14 7L20 1 M14 20L20 14 M1 20L7 14" fill="none" stroke="#222" stroke-width="1"/></g></g><g transform="translate(9,398)"><g transform="translate(2,2)"><path d="M1 7H14V20H1Z" fill="#f08a3c" opacity="0.95"/><path d="M1 7H14V20H1Z M7 1H20V14H7Z M1 7L7 1 M14 7L20 1 M14 20L20 14 M1 20L7 14" fill="none" stroke="#222" stroke-width="1"/></g></g><g transform="translate(9,430)"><g transform="translate(2,2)"><path d="M1 7L7 1V14L1 20Z" fill="#f08a3c" opacity="0.95"/><path d="M1 7H14V20H1Z M7 1H20V14H7Z M1 7L7 1 M14 7L20 1 M14 20L20 14 M1 20L7 14" fill="none" stroke="#222" stroke-width="1"/></g></g><g transform="translate(9,462)"><g transform="translate(2,2)"><path d="M7 1H20V14H7Z" fill="#f08a3c" opacity="0.95"/><path d="M1 7H14V20H1Z M7 1H20V14H7Z M1 7L7 1 M14 7L20 1 M14 20L20 14 M1 20L7 14" fill="none" stroke="#222" stroke-width="1"/></g></g><g transform="translate(9,494)"><g transform="translate(2,2)"><path d="M14 7L20 1V14L14 20Z" fill="#f08a3c" opacity="0.95"/><path d="M1 7H14V20H1Z M7 1H20V14H7Z M1 7L7 1 M14 7L20 1 M14 20L20 14 M1 20L7 14" fill="none" stroke="#222" stroke-width="1"/></g></g><g transform="translate(9,526)"><g transform="translate(2,2)"><path d="M1 20L7 14H20L14 20Z" fill="#f08a3c" opacity="0.95"/><path d="M1 7H14V20H1Z M7 1H20V14H7Z M1 7L7 1 M14 7L20 1 M14 20L20 14 M1 20L7 14" fill="none" stroke="#222" stroke-width="1"/></g></g><g transform="translate(9,558)"><path d="M12 3 L22 8 V19 L12 24 L2 19 V8Z" fill="#e8843c"/><path d="M12 14 L22 8 V19 L12 24Z" fill="#f09a50"/><path d="M2 8 L12 14 L22 8 L12 3Z" fill="#f4a868"/><text x="0" y="7" font-family="Liberation Sans" font-weight="bold" font-size="7" fill="#222" textLength="24" lengthAdjust="spacingAndGlyphs">FRONT</text></g><g transform="translate(9,590)"><path d="M12 3 L22 8 V19 L12 24 L2 19 V8Z" fill="#e8843c"/><path d="M12 14 L22 8 V19 L12 24Z" fill="#f09a50"/><path d="M2 8 L12 14 L22 8 L12 3Z" fill="#f4a868"/><text x="2" y="7" font-family="Liberation Sans" font-weight="bold" font-size="7" fill="#222" textLength="20" lengthAdjust="spacingAndGlyphs">BACK</text></g><g transform="translate(9,622)"><rect x="1" y="1" width="22" height="22" rx="3" fill="#e8e8ea" stroke="#c8c8cc" stroke-width="1"/><circle cx="8" cy="12" r="3.2" fill="#3a6ed0"/><circle cx="16" cy="12" r="3.2" fill="#e83a90"/></g></svg><svg class="a" style="left:2472px;top:61px;z-index:3" width="87" height="420" viewBox="2472 61 87 420"><rect x="2505" y="67" width="1.2" height="1.2" fill="#bdb9b5"/><rect x="2505" y="70" width="1.2" height="1.2" fill="#bdb9b5"/><rect x="2508" y="67" width="1.2" height="1.2" fill="#bdb9b5"/><rect x="2508" y="70" width="1.2" height="1.2" fill="#bdb9b5"/><rect x="2511" y="67" width="1.2" height="1.2" fill="#bdb9b5"/><rect x="2511" y="70" width="1.2" height="1.2" fill="#bdb9b5"/><rect x="2514" y="67" width="1.2" height="1.2" fill="#bdb9b5"/><rect x="2514" y="70" width="1.2" height="1.2" fill="#bdb9b5"/><rect x="2517" y="67" width="1.2" height="1.2" fill="#bdb9b5"/><rect x="2517" y="70" width="1.2" height="1.2" fill="#bdb9b5"/><rect x="2520" y="67" width="1.2" height="1.2" fill="#bdb9b5"/><rect x="2520" y="70" width="1.2" height="1.2" fill="#bdb9b5"/><rect x="2505" y="179" width="1.2" height="1.2" fill="#bdb9b5"/><rect x="2505" y="182" width="1.2" height="1.2" fill="#bdb9b5"/><rect x="2508" y="179" width="1.2" height="1.2" fill="#bdb9b5"/><rect x="2508" y="182" width="1.2" height="1.2" fill="#bdb9b5"/><rect x="2511" y="179" width="1.2" height="1.2" fill="#bdb9b5"/><rect x="2511" y="182" width="1.2" height="1.2" fill="#bdb9b5"/><rect x="2514" y="179" width="1.2" height="1.2" fill="#bdb9b5"/><rect x="2514" y="182" width="1.2" height="1.2" fill="#bdb9b5"/><rect x="2517" y="179" width="1.2" height="1.2" fill="#bdb9b5"/><rect x="2517" y="182" width="1.2" height="1.2" fill="#bdb9b5"/><rect x="2520" y="179" width="1.2" height="1.2" fill="#bdb9b5"/><rect x="2520" y="182" width="1.2" height="1.2" fill="#bdb9b5"/><g transform="translate(2502,78)"><circle cx="12" cy="12" r="10.5" fill="#8a8a8a"/><circle cx="12" cy="12" r="7.5" fill="none" stroke="#c4c4c4" stroke-width="1.5"/><path d="M6 17L18 7" stroke="#c4c4c4" stroke-width="3"/><circle cx="12" cy="12" r="6" fill="none" stroke="#8a8a8a" stroke-width="1"/></g><g transform="translate(2502,110)"><rect x="2" y="1" width="21" height="21" fill="#8a8a8a"/><ellipse cx="14" cy="9" rx="6" ry="7" fill="#a8a8a8"/><ellipse cx="12" cy="11" rx="4" ry="4" fill="#777"/><text x="3" y="21" font-family="Liberation Mono" font-weight="bold" font-size="7" fill="#fff">EDL</text></g><g transform="translate(2502,142)"><rect x="2" y="1" width="21" height="21" fill="#8a8a8a"/><ellipse cx="14" cy="9" rx="6" ry="7" fill="#a8a8a8"/><ellipse cx="12" cy="11" rx="4" ry="4" fill="#777"/><text x="2" y="21" font-family="Liberation Mono" font-weight="bold" font-size="6.5" fill="#fff">SSAO</text></g><g transform="translate(2502,190)"><rect x="2" y="9" width="21" height="13" fill="#c0c0c0" stroke="#888" stroke-width="0.8"/><path d="M2 4 L22 2 L23 7 L3 9Z" fill="#666"/><path d="M6 3.5L9 8.5M11 3L14 8M16 2.5L19 7.5" stroke="#ddd" stroke-width="1.5"/><rect x="2" y="9" width="21" height="3" fill="#888"/></g><g transform="translate(2502,221)"><rect x="11" y="0" width="3" height="13" fill="#c08040"/><path d="M7 13 H17 L19 23 H5Z" fill="#d09a58"/><path d="M8 15V22M11 15V22M14 15V22" stroke="#b07838" stroke-width="0.8"/></g><g transform="translate(2502,254)"><rect x="1" y="1" width="22" height="22" rx="3" fill="#fff" stroke="#444" stroke-width="1.8"/><circle cx="12" cy="12" r="8" fill="none" stroke="#888" stroke-width="0.8"/><path d="M16 7 L11 11 L8 17 L13 13Z" fill="#e04040"/><path d="M16 7 L13 13 L8 17" fill="#555"/></g><g transform="translate(2502,313)"><path d="M5 3H16" stroke="#1a1a8a" stroke-width="1.5"/><path d="M17 3L13 0.5V5.5Z" fill="#1a1a8a"/><text x="3" y="22" font-family="Liberation Sans" font-weight="bold" font-size="17" fill="#1a2aa0">N</text></g><g transform="translate(2502,344)"><rect x="2" y="1" width="21" height="21" fill="#fff"/><path d="M6 6 L12 2 L19 5 L21 12 L17 17 L9 17 L4 12Z" fill="#a8a8a8" stroke="#777" stroke-width="0.6"/><path d="M12 2V10L6 6M12 10L21 12M12 10L9 17" stroke="#ddd" stroke-width="0.6" fill="none"/><text x="4" y="22" font-family="Liberation Sans" font-weight="bold" font-size="6" fill="#111">HPR</text></g><g transform="translate(2502,375)"><text x="1" y="7" font-family="Liberation Sans" font-weight="bold" font-size="7.5" fill="#bbb" textLength="22" lengthAdjust="spacingAndGlyphs">M3C2</text><path d="M3 12 Q12 9 21 12 L21 19 Q12 22 3 19Z" fill="none" stroke="#bbb" stroke-width="1"/><g fill="#999"><circle cx="4" cy="13" r="1"/><circle cx="9" cy="18" r="1"/><circle cx="15" cy="13" r="1"/><circle cx="20" cy="17" r="1"/><circle cx="6" cy="21" r="1"/></g></g><g transform="translate(2502,407)"><rect x="2" y="1" width="21" height="21" fill="#333"/><path d="M4 4 Q10 0 14 6 Q18 10 22 6 M3 10 Q10 6 13 12 Q18 16 22 12" stroke="#999" stroke-width="2" fill="none"/><rect x="3" y="14" width="19" height="7" fill="#555"/><text x="3" y="21" font-family="Liberation Mono" font-weight="bold" font-size="7" fill="#fff">PCV</text></g><g transform="translate(2502,439)"><path d="M12 1 L22 8 L19 20 L5 20 L2 8Z" fill="#3a8a3a"/><path d="M12 5 L18 9 L16 16 L8 16 L6 9Z" fill="#6aa040"/><path d="M12 1V5M22 8L18 9M19 20L16 16M5 20L8 16M2 8L6 9" stroke="#2a5a2a" stroke-width="1"/></g></svg><div class="a" style="left:2483px;top:287px;font-size:13px;letter-spacing:0.55px;color:#1a1a1a;z-index:3">CSF Filter</div><div class="a" style="left:45px;top:64px;font-size:13px;letter-spacing:0.55px">DB Tree</div><svg class="a" style="left:346px;top:66px" width="12" height="12" viewBox="0 0 12 12"><rect x="0.7" y="0.7" width="10.6" height="10.6" rx="2.5" fill="none" stroke="#6a6a6a" stroke-width="1.3"/><rect x="4.5" y="2.7" width="4.8" height="4.8" rx="1" fill="none" stroke="#6a6a6a" stroke-width="1.2"/><rect x="2.7" y="4.5" width="4.8" height="4.8" rx="1" fill="#efebe7" stroke="#6a6a6a" stroke-width="1.2"/></svg><div id="tree" class="a"><svg class="a" style="left:0;top:0" width="80" height="40" viewBox="51 91 80 40"><path d="M55 96H67L61 104Z" fill="#5a4444"/><rect x="74.5" y="93.5" width="13" height="13" fill="#fff" stroke="#a8a4a0"/><path d="M77 100 L80 104 L85 95.5" fill="none" stroke="#000" stroke-width="1.8"/><path d="M94.5 95 L99 93 L102 94 L107 96.5 L107.5 105 L98 107 Z" fill="#c8901a" stroke="#a87010" stroke-width="0.7"/><path d="M95.5 98.5 L106 96.5 L108.5 105.5 L98 107.5 Z" fill="#f2c445" stroke="#c89020" stroke-width="0.6"/><path d="M96 99 L105.5 97.2 L106 99 L96.5 101Z" fill="#f8dc80"/></svg><div class="a" style="left:65px;top:1px;font-size:13px;letter-spacing:0.92px;white-space:pre;color:#111">pointcloud_map.pcd (/home/ism...</div><div class="a" style="left:0;top:19px;width:298px;height:19px;background:#308cc6"></div><div class="a" style="left:82px;top:19px;width:216px;height:19px;border:1px solid #2a78b0;border-right:none"></div><svg class="a" style="left:0;top:19px" width="100" height="19" viewBox="51 110 100 19"><path d="M77 113L85 119L77 125Z" fill="#3a2e3a"/><rect x="94.5" y="112.5" width="13" height="13" fill="#fff" stroke="#c8b8a8"/><path d="M97 119 L100 123 L105 114.5" fill="none" stroke="#000" stroke-width="1.8"/><path d="M115 121 Q114 115 119 114 Q122 112 126 114 Q130 116 129.5 120 Q129 124 123 124.5 Q117 125 115 121Z" fill="#b4d0ea" stroke="#3c4c5c" stroke-width="1"/><path d="M118 118 Q121 115 125 117" fill="none" stroke="#e6f0fa" stroke-width="1.5"/></svg><div class="a" style="left:85px;top:20px;font-size:13px;letter-spacing:0.85px;white-space:pre;color:#e4eef8">pointcloud_map</div></div><div class="a" style="left:41px;top:1160px;width:320px;height:1px;background:#c4c0bc"></div><div class="a" style="left:118px;top:1161px;width:91px;height:24px;background:#dcd9d5;border:1px solid #c9c5c1;border-top:none;border-radius:0 0 3px 3px"></div><div class="a" style="left:41px;top:1160px;width:78px;height:27px;background:linear-gradient(#f0ede9,#f6f3ef);border:1px solid #bcb8b4;border-top:none;border-radius:0 0 3px 3px"></div><div class="a" style="left:53px;top:1166px;font-size:13px;letter-spacing:0.6px">DB Tree</div><div class="a" style="left:130px;top:1165px;font-size:13px;letter-spacing:0.65px">Properties</div><div id="view" class="a"><svg class="a" style="left:0;top:0" width="2106" height="1126" viewBox="365 62 2106 1126"><defs><filter id="nz01" filterUnits="userSpaceOnUse" x="1032" y="256" width="772" height="738" color-interpolation-filters="sRGB"><feTurbulence type="fractalNoise" baseFrequency="0.09" numOctaves="2" seed="3"/><feColorMatrix type="matrix" values="0 0 0 0 1  0 0 0 0 1  0 0 0 0 1  4 0 0 0 -2.5"/><feComponentTransfer><feFuncA type="discrete" tableValues="0 1"/></feComponentTransfer></filter><filter id="nz02" filterUnits="userSpaceOnUse" x="1032" y="256" width="772" height="738" color-interpolation-filters="sRGB"><feTurbulence type="fractalNoise" baseFrequency="0.09" numOctaves="2" seed="4"/><feColorMatrix type="matrix" values="0 0 0 0 1  0 0 0 0 1  0 0 0 0 1  4 0 0 0 -2.35"/><feComponentTransfer><feFuncA type="discrete" tableValues="0 1"/></feComponentTransfer></filter><filter id="nz40" filterUnits="userSpaceOnUse" x="1032" y="256" width="772" height="738" color-interpolation-filters="sRGB"><feTurbulence type="fractalNoise" baseFrequency="0.22" numOctaves="2" seed="5"/><feColorMatrix type="matrix" values="0 0 0 0 1  0 0 0 0 1  0 0 0 0 1  4 0 0 0 -1.65"/><feComponentTransfer><feFuncA type="discrete" tableValues="0 1"/></feComponentTransfer></filter><filter id="nz18" filterUnits="userSpaceOnUse" x="1032" y="256" width="772" height="738" color-interpolation-filters="sRGB"><feTurbulence type="fractalNoise" baseFrequency="0.22" numOctaves="2" seed="6"/><feColorMatrix type="matrix" values="0 0 0 0 1  0 0 0 0 1  0 0 0 0 1  4 0 0 0 -1.9"/><feComponentTransfer><feFuncA type="discrete" tableValues="0 1"/></feComponentTransfer></filter><filter id="nz05" filterUnits="userSpaceOnUse" x="1032" y="256" width="772" height="738" color-interpolation-filters="sRGB"><feTurbulence type="fractalNoise" baseFrequency="0.09" numOctaves="2" seed="7"/><feColorMatrix type="matrix" values="0 0 0 0 1  0 0 0 0 1  0 0 0 0 1  4 0 0 0 -2.17"/><feComponentTransfer><feFuncA type="discrete" tableValues="0 1"/></feComponentTransfer></filter><filter id="nz35" filterUnits="userSpaceOnUse" x="1032" y="256" width="772" height="738" color-interpolation-filters="sRGB"><feTurbulence type="fractalNoise" baseFrequency="0.22" numOctaves="2" seed="8"/><feColorMatrix type="matrix" values="0 0 0 0 1  0 0 0 0 1  0 0 0 0 1  4 0 0 0 -1.7"/><feComponentTransfer><feFuncA type="discrete" tableValues="0 1"/></feComponentTransfer></filter><filter id="nz30" filterUnits="userSpaceOnUse" x="1032" y="256" width="772" height="738" color-interpolation-filters="sRGB"><feTurbulence type="fractalNoise" baseFrequency="0.22" numOctaves="2" seed="9"/><feColorMatrix type="matrix" values="0 0 0 0 1  0 0 0 0 1  0 0 0 0 1  4 0 0 0 -1.75"/><feComponentTransfer><feFuncA type="discrete" tableValues="0 1"/></feComponentTransfer></filter><filter id="nz25" filterUnits="userSpaceOnUse" x="1032" y="256" width="772" height="738" color-interpolation-filters="sRGB"><feTurbulence type="fractalNoise" baseFrequency="0.22" numOctaves="2" seed="10"/><feColorMatrix type="matrix" values="0 0 0 0 1  0 0 0 0 1  0 0 0 0 1  4 0 0 0 -1.8"/><feComponentTransfer><feFuncA type="discrete" tableValues="0 1"/></feComponentTransfer></filter><filter id="nz20" filterUnits="userSpaceOnUse" x="1032" y="256" width="772" height="738" color-interpolation-filters="sRGB"><feTurbulence type="fractalNoise" baseFrequency="0.22" numOctaves="2" seed="11"/><feColorMatrix type="matrix" values="0 0 0 0 1  0 0 0 0 1  0 0 0 0 1  4 0 0 0 -1.88"/><feComponentTransfer><feFuncA type="discrete" tableValues="0 1"/></feComponentTransfer></filter><filter id="nz15" filterUnits="userSpaceOnUse" x="1032" y="256" width="772" height="738" color-interpolation-filters="sRGB"><feTurbulence type="fractalNoise" baseFrequency="0.22" numOctaves="2" seed="12"/><feColorMatrix type="matrix" values="0 0 0 0 1  0 0 0 0 1  0 0 0 0 1  4 0 0 0 -1.95"/><feComponentTransfer><feFuncA type="discrete" tableValues="0 1"/></feComponentTransfer></filter><filter id="nz12" filterUnits="userSpaceOnUse" x="1032" y="256" width="772" height="738" color-interpolation-filters="sRGB"><feTurbulence type="fractalNoise" baseFrequency="0.22" numOctaves="2" seed="13"/><feColorMatrix type="matrix" values="0 0 0 0 1  0 0 0 0 1  0 0 0 0 1  4 0 0 0 -2.0"/><feComponentTransfer><feFuncA type="discrete" tableValues="0 1"/></feComponentTransfer></filter><filter id="nz08" filterUnits="userSpaceOnUse" x="1032" y="256" width="772" height="738" color-interpolation-filters="sRGB"><feTurbulence type="fractalNoise" baseFrequency="0.22" numOctaves="2" seed="14"/><feColorMatrix type="matrix" values="0 0 0 0 1  0 0 0 0 1  0 0 0 0 1  4 0 0 0 -2.08"/><feComponentTransfer><feFuncA type="discrete" tableValues="0 1"/></feComponentTransfer></filter><filter id="nz06" filterUnits="userSpaceOnUse" x="1032" y="256" width="772" height="738" color-interpolation-filters="sRGB"><feTurbulence type="fractalNoise" baseFrequency="0.22" numOctaves="2" seed="15"/><feColorMatrix type="matrix" values="0 0 0 0 1  0 0 0 0 1  0 0 0 0 1  4 0 0 0 -2.15"/><feComponentTransfer><feFuncA type="discrete" tableValues="0 1"/></feComponentTransfer></filter><filter id="nz03" filterUnits="userSpaceOnUse" x="1032" y="256" width="772" height="738" color-interpolation-filters="sRGB"><feTurbulence type="fractalNoise" baseFrequency="0.09" numOctaves="2" seed="16"/><feColorMatrix type="matrix" values="0 0 0 0 1  0 0 0 0 1  0 0 0 0 1  4 0 0 0 -2.3"/><feComponentTransfer><feFuncA type="discrete" tableValues="0 1"/></feComponentTransfer></filter><mask id="hm0" maskUnits="userSpaceOnUse" x="1000" y="230" width="830" height="800"><path d="M1080,482 L1107,443 L1149,411 L1194,382 L1231,356 L1254,334" fill="none" stroke="#fff" stroke-width="160" stroke-linejoin="round" stroke-linecap="round"/></mask><mask id="hm1" maskUnits="userSpaceOnUse" x="1000" y="230" width="830" height="800"><path d="M1080,482 L1107,443 L1149,411 L1194,382 L1231,356 L1254,334" fill="none" stroke="#fff" stroke-width="60" stroke-linejoin="round" stroke-linecap="round"/></mask><mask id="hm2" maskUnits="userSpaceOnUse" x="1000" y="230" width="830" height="800"><path d="M1231,356 L1254,334 L1294,327 L1320,329 L1360,337 L1400,356 L1420,369" fill="none" stroke="#fff" stroke-width="50" stroke-linejoin="round" stroke-linecap="round"/></mask><mask id="hm3" maskUnits="userSpaceOnUse" x="1000" y="230" width="830" height="800"><path d="M1420,369 L1468,398 L1489,430 L1499,461 L1507,503 L1513,535 L1511,580" fill="none" stroke="#fff" stroke-width="36" stroke-linejoin="round" stroke-linecap="round"/></mask><mask id="hm4" maskUnits="userSpaceOnUse" x="1000" y="230" width="830" height="800"><path d="M1511,580 L1526,604 L1545,620 L1573,641 L1605,673 L1626,699 L1637,731 L1634,768 L1639,805 L1666,831" fill="none" stroke="#fff" stroke-width="36" stroke-linejoin="round" stroke-linecap="round"/></mask><mask id="hm5" maskUnits="userSpaceOnUse" x="1000" y="230" width="830" height="800"><path d="M1666,831 L1692,852 L1719,871 L1748,893 L1790,925" fill="none" stroke="#fff" stroke-width="60" stroke-linejoin="round" stroke-linecap="round"/></mask><mask id="hm6" maskUnits="userSpaceOnUse" x="1000" y="230" width="830" height="800"><path d="M1080,482 L1107,443 L1149,411 L1194,382 L1231,356 L1254,334 L1294,327 L1320,329 L1360,337 L1400,356 L1420,369 L1468,398 L1489,430 L1499,461 L1507,503 L1513,535 L1511,580 L1526,604 L1545,620 L1573,641 L1605,673 L1626,699 L1637,731 L1634,768 L1639,805 L1666,831 L1692,852 L1719,871 L1740,884 L1748,893 L1719,897 L1692,884 L1666,866 L1639,844 L1613,823 L1573,815 L1534,815 L1494,826 L1468,844 L1441,863 L1415,880 L1373,900 L1334,910 L1281,908 L1278,910 L1278,971 L1244,971 L1241,910 L1236,905 L1215,889 L1188,873 L1162,852 L1141,831 L1122,810 L1115,784 L1120,752 L1128,699 L1136,660 L1146,620 L1160,590 L1185,553 L1167,538 L1136,530 L1109,511 L1080,488 L1080,482" fill="none" stroke="#fff" stroke-width="12" stroke-linejoin="round" stroke-linecap="round"/></mask><mask id="hm7" maskUnits="userSpaceOnUse" x="1000" y="230" width="830" height="800"><path d="M1254,385 L1262,408 L1294,432 L1330,450 L1348,462 L1379,490 L1420,523 L1445,541" fill="none" stroke="#fff" stroke-width="44" stroke-linejoin="round" stroke-linecap="round"/></mask><mask id="hm8" maskUnits="userSpaceOnUse" x="1000" y="230" width="830" height="800"><path d="M1257,366 L1281,362 L1320,368" fill="none" stroke="#fff" stroke-width="30" stroke-linejoin="round" stroke-linecap="round"/></mask><clipPath id="hp0"><path d="M1613,823 L1573,815 L1534,815 L1494,826 L1468,844 L1441,863 L1415,880 L1373,900 L1334,910 L1281,908 L1281,935 L1334,935 L1400,915 L1494,860 L1600,850 L1653,872 L1692,900 L1732,897 Z"/></clipPath><clipPath id="hp1"><path d="M1040,395 L1080,482 L1080,488 L1109,511 L1136,530 L1167,538 L1185,553 L1160,590 L1146,620 L1136,660 L1128,699 L1120,752 L1115,784 L1122,810 L1141,831 L1162,852 L1188,873 L1215,889 L1236,905 L1241,910 L1244,971 L1200,960 L1120,920 L1060,860 L1040,760 L1045,600 L1040,480 Z"/></clipPath><clipPath id="hp2"><path d="M1188,873 L1215,889 L1236,905 L1241,910 L1244,971 L1278,971 L1278,910 L1281,908 L1334,910 L1373,900 L1415,880 L1441,863 L1415,930 L1340,965 L1280,990 L1230,985 L1180,930 Z"/></clipPath><clipPath id="hp3"><path d="M1393,568 L1430,570 L1479,588 L1466,662 L1462,723 L1442,755 L1405,773 L1368,760 L1400,700 L1415,630 Z"/></clipPath><clipPath id="hp4"><path d="M1115,790 L1141,831 L1162,852 L1188,873 L1215,889 L1236,905 L1200,935 L1150,910 L1100,875 L1072,840 L1068,800 Z"/></clipPath><clipPath id="hp5"><path d="M1415,880 L1494,860 L1600,850 L1653,872 L1692,900 L1732,897 L1790,925 L1800,980 L1700,950 L1600,920 L1500,930 L1420,935 Z"/></clipPath><clipPath id="hh0"><path d="M1109,481 L1157,425 L1180,402 L1195,411 L1199,430 L1157,483 L1144,497 L1122,487 Z"/></clipPath><mask id="he0" maskUnits="userSpaceOnUse" x="1000" y="230" width="830" height="800"><path d="M1109,481 L1157,425 L1180,402 L1195,411 L1199,430 L1157,483 L1144,497 L1122,487 Z" fill="none" stroke="#fff" stroke-width="16"/></mask><clipPath id="hh1"><path d="M1199,460 L1224,436 L1247,441 L1259,455 L1238,501 L1215,533 L1192,525 L1185,506 Z"/></clipPath><mask id="he1" maskUnits="userSpaceOnUse" x="1000" y="230" width="830" height="800"><path d="M1199,460 L1224,436 L1247,441 L1259,455 L1238,501 L1215,533 L1192,525 L1185,506 Z" fill="none" stroke="#fff" stroke-width="16"/></mask><clipPath id="hh2"><path d="M1257,366 L1281,362 L1320,368 L1360,380 L1400,392 L1420,400 L1441,419 L1468,445 L1476,467 L1482,501 L1485,540 L1475,547 L1445,545 L1420,529 L1379,497 L1348,466 L1330,450 L1294,432 L1262,408 L1254,385 Z"/></clipPath><mask id="he2" maskUnits="userSpaceOnUse" x="1000" y="230" width="830" height="800"><path d="M1257,366 L1281,362 L1320,368 L1360,380 L1400,392 L1420,400 L1441,419 L1468,445 L1476,467 L1482,501 L1485,540 L1475,547 L1445,545 L1420,529 L1379,497 L1348,466 L1330,450 L1294,432 L1262,408 L1254,385 Z" fill="none" stroke="#fff" stroke-width="16"/></mask><clipPath id="hh3"><path d="M1289,470 L1375,523 L1321,607 L1338,598 L1368,578 L1397,558 L1430,570 L1479,588 L1466,662 L1462,723 L1442,755 L1405,773 L1368,760 L1319,723 L1257,686 L1215,657 L1170,628 L1194,593 L1228,554 L1262,503 Z"/></clipPath><mask id="he3" maskUnits="userSpaceOnUse" x="1000" y="230" width="830" height="800"><path d="M1289,470 L1375,523 L1321,607 L1338,598 L1368,578 L1397,558 L1430,570 L1479,588 L1466,662 L1462,723 L1442,755 L1405,773 L1368,760 L1319,723 L1257,686 L1215,657 L1170,628 L1194,593 L1228,554 L1262,503 Z" fill="none" stroke="#fff" stroke-width="16"/></mask><clipPath id="hh4"><path d="M1151,683 L1178,681 L1220,707 L1260,744 L1247,778 L1215,821 L1188,847 L1157,831 L1141,805 L1138,752 L1144,707 Z"/></clipPath><mask id="he4" maskUnits="userSpaceOnUse" x="1000" y="230" width="830" height="800"><path d="M1151,683 L1178,681 L1220,707 L1260,744 L1247,778 L1215,821 L1188,847 L1157,831 L1141,805 L1138,752 L1144,707 Z" fill="none" stroke="#fff" stroke-width="16"/></mask><clipPath id="hh5"><path d="M1289,778 L1320,784 L1373,810 L1400,826 L1405,858 L1373,884 L1268,887 L1228,871 L1247,831 L1268,800 Z"/></clipPath><mask id="he5" maskUnits="userSpaceOnUse" x="1000" y="230" width="830" height="800"><path d="M1289,778 L1320,784 L1373,810 L1400,826 L1405,858 L1373,884 L1268,887 L1228,871 L1247,831 L1268,800 Z" fill="none" stroke="#fff" stroke-width="16"/></mask><clipPath id="hh6"><path d="M1492,631 L1529,646 L1573,678 L1608,707 L1613,739 L1605,768 L1573,782 L1542,778 L1505,760 L1489,699 Z"/></clipPath><mask id="he6" maskUnits="userSpaceOnUse" x="1000" y="230" width="830" height="800"><path d="M1492,631 L1529,646 L1573,678 L1608,707 L1613,739 L1605,768 L1573,782 L1542,778 L1505,760 L1489,699 Z" fill="none" stroke="#fff" stroke-width="16"/></mask><clipPath id="bbclip"><rect x="1032" y="256" width="772" height="738"/></clipPath></defs><g clip-path="url(#bbclip)"><g mask="url(#hm0)"><rect x="1032" y="256" width="772" height="738" filter="url(#nz02)"/></g><g mask="url(#hm1)"><rect x="1032" y="256" width="772" height="738" filter="url(#nz35)"/></g><g mask="url(#hm2)"><rect x="1032" y="256" width="772" height="738" filter="url(#nz25)"/></g><g mask="url(#hm3)"><rect x="1032" y="256" width="772" height="738" filter="url(#nz15)"/></g><g mask="url(#hm4)"><rect x="1032" y="256" width="772" height="738" filter="url(#nz15)"/></g><g mask="url(#hm5)"><rect x="1032" y="256" width="772" height="738" filter="url(#nz15)"/></g><g mask="url(#hm6)"><rect x="1032" y="256" width="772" height="738" filter="url(#nz30)"/></g><g mask="url(#hm7)"><rect x="1032" y="256" width="772" height="738" filter="url(#nz30)"/></g><g mask="url(#hm8)"><rect x="1032" y="256" width="772" height="738" filter="url(#nz30)"/></g><g clip-path="url(#hp0)"><rect x="1032" y="256" width="772" height="738" filter="url(#nz35)"/></g><g clip-path="url(#hp1)"><rect x="1032" y="256" width="772" height="738" filter="url(#nz02)"/></g><g clip-path="url(#hp2)"><rect x="1032" y="256" width="772" height="738" filter="url(#nz12)"/></g><g clip-path="url(#hp3)"><rect x="1032" y="256" width="772" height="738" filter="url(#nz18)"/></g><g clip-path="url(#hp4)"><rect x="1032" y="256" width="772" height="738" filter="url(#nz18)"/></g><g clip-path="url(#hp5)"><rect x="1032" y="256" width="772" height="738" filter="url(#nz05)"/></g><path d="M1080,482 L1107,443 L1149,411 L1194,382 L1231,356 L1254,334 L1294,327 L1320,329 L1360,337 L1400,356 L1420,369 L1468,398 L1489,430 L1499,461 L1507,503 L1513,535 L1511,580 L1526,604 L1545,620 L1573,641 L1605,673 L1626,699 L1637,731 L1634,768 L1639,805 L1666,831 L1692,852 L1719,871 L1740,884 L1748,893 L1719,897 L1692,884 L1666,866 L1639,844 L1613,823 L1573,815 L1534,815 L1494,826 L1468,844 L1441,863 L1415,880 L1373,900 L1334,910 L1281,908 L1278,910 L1278,971 L1244,971 L1241,910 L1236,905 L1215,889 L1188,873 L1162,852 L1141,831 L1122,810 L1115,784 L1120,752 L1128,699 L1136,660 L1146,620 L1160,590 L1185,553 L1167,538 L1136,530 L1109,511 L1080,488 Z M1109,481 L1157,425 L1180,402 L1195,411 L1199,430 L1157,483 L1144,497 L1122,487 Z M1199,460 L1224,436 L1247,441 L1259,455 L1238,501 L1215,533 L1192,525 L1185,506 Z M1257,366 L1281,362 L1320,368 L1360,380 L1400,392 L1420,400 L1441,419 L1468,445 L1476,467 L1482,501 L1485,540 L1475,547 L1445,545 L1420,529 L1379,497 L1348,466 L1330,450 L1294,432 L1262,408 L1254,385 Z M1289,470 L1375,523 L1321,607 L1338,598 L1368,578 L1397,558 L1430,570 L1479,588 L1466,662 L1462,723 L1442,755 L1405,773 L1368,760 L1319,723 L1257,686 L1215,657 L1170,628 L1194,593 L1228,554 L1262,503 Z M1151,683 L1178,681 L1220,707 L1260,744 L1247,778 L1215,821 L1188,847 L1157,831 L1141,805 L1138,752 L1144,707 Z M1289,778 L1320,784 L1373,810 L1400,826 L1405,858 L1373,884 L1268,887 L1228,871 L1247,831 L1268,800 Z M1492,631 L1529,646 L1573,678 L1608,707 L1613,739 L1605,768 L1573,782 L1542,778 L1505,760 L1489,699 Z" fill="#ffffff" fill-rule="evenodd"/><g clip-path="url(#hh0)"><rect x="1032" y="256" width="772" height="738" filter="url(#nz15)"/><g mask="url(#he0)"><rect x="1032" y="256" width="772" height="738" filter="url(#nz35)"/></g></g><g clip-path="url(#hh1)"><rect x="1032" y="256" width="772" height="738" filter="url(#nz15)"/><g mask="url(#he1)"><rect x="1032" y="256" width="772" height="738" filter="url(#nz35)"/></g></g><g clip-path="url(#hh2)"><rect x="1032" y="256" width="772" height="738" filter="url(#nz08)"/><g mask="url(#he2)"><rect x="1032" y="256" width="772" height="738" filter="url(#nz35)"/></g></g><g clip-path="url(#hh3)"><rect x="1032" y="256" width="772" height="738" filter="url(#nz01)"/><g mask="url(#he3)"><rect x="1032" y="256" width="772" height="738" filter="url(#nz20)"/></g></g><g clip-path="url(#hh4)"><rect x="1032" y="256" width="772" height="738" filter="url(#nz08)"/><g mask="url(#he4)"><rect x="1032" y="256" width="772" height="738" filter="url(#nz35)"/></g></g><g clip-path="url(#hh5)"><rect x="1032" y="256" width="772" height="738" filter="url(#nz25)"/><g mask="url(#he5)"><rect x="1032" y="256" width="772" height="738" filter="url(#nz35)"/></g></g><g clip-path="url(#hh6)"><rect x="1032" y="256" width="772" height="738" filter="url(#nz20)"/><g mask="url(#he6)"><rect x="1032" y="256" width="772" height="738" filter="url(#nz35)"/></g></g><path d="M1259,257 L1307,316" fill="none" stroke="#fff" stroke-width="2"/><path d="M1253,269 L1302,322" fill="none" stroke="#fff" stroke-width="1.5"/><path d="M1326,329 L1392,283" fill="none" stroke="#fff" stroke-width="2"/><path d="M1340,300 L1380,275" fill="none" stroke="#fff" stroke-width="1.5"/><path d="M1464,314 L1478,345 L1505,413" fill="none" stroke="#fff" stroke-width="1.5"/><path d="M1507,456 L1525,490 L1543,516" fill="none" stroke="#fff" stroke-width="2"/><path d="M1423,329 L1452,391" fill="none" stroke="#fff" stroke-width="1.5"/><path d="M1642,705 L1652,760 L1660,800 L1684,831" fill="none" stroke="#fff" stroke-width="1.5"/><path d="M1650,700 L1662,760 L1672,805 L1700,830" fill="none" stroke="#fff" stroke-width="1.5"/><path d="M1044,760 L1070,740" fill="none" stroke="#fff" stroke-width="1.5"/><path d="M1052,800 L1080,780 L1084,823" fill="none" stroke="#fff" stroke-width="1.5"/><path d="M1070,835 L1130,880 L1160,905" fill="none" stroke="#fff" stroke-width="1.5"/><path d="M1090,860 L1140,900 L1180,930" fill="none" stroke="#fff" stroke-width="1.5"/><path d="M1075,500 L1100,520 L1115,540" fill="none" stroke="#fff" stroke-width="1.5"/><path d="M1060,470 L1055,430" fill="none" stroke="#fff" stroke-width="1.5"/><path d="M1130,325 L1160,350" fill="none" stroke="#fff" stroke-width="1.5"/><path d="M1170,300 L1180,330" fill="none" stroke="#fff" stroke-width="1.5"/><path d="M1740,900 L1780,880 L1800,920" fill="none" stroke="#fff" stroke-width="1.5"/><path d="M1760,940 L1790,960" fill="none" stroke="#fff" stroke-width="1.5"/></g><path d="M1159.5 553.5 L1159.5 576.5 L1164.5 571.5 L1168 579 L1171.5 577.5 L1168.2 570 L1175.5 570 Z" fill="#f4f4f4" stroke="#000" stroke-width="1.3" stroke-linejoin="round"/><rect x="1031.5" y="255.5" width="773" height="739" fill="none" stroke="#e8e800" stroke-width="1"/><path d="M1408 625.5H1428M1417.5 615V636" stroke="#bbbbbb" stroke-width="1" opacity="0.8"/><path d="M1882 1157.5H2400M1882.5 1153V1162M2399.5 1153V1162" stroke="#ffffff" stroke-width="1"/><path d="M2434.5 1133V1158.5" stroke="#00ff00" stroke-width="2"/><path d="M2434 1158.5H2460" stroke="#ff0000" stroke-width="3"/></svg><div class="a" style="left:1764px;top:1101px;width:25px;font-size:13px;letter-spacing:0.6px;color:#fff">900</div></div><div class="a" style="left:45px;top:1196px;font-size:13px;letter-spacing:0.55px">Console</div><svg class="a" style="left:2444px;top:1198px" width="12" height="12" viewBox="0 0 12 12"><rect x="0.7" y="0.7" width="10.6" height="10.6" rx="2.5" fill="none" stroke="#6a6a6a" stroke-width="1.3"/><rect x="4.5" y="2.7" width="4.8" height="4.8" rx="1" fill="none" stroke="#6a6a6a" stroke-width="1.2"/><rect x="2.7" y="4.5" width="4.8" height="4.8" rx="1" fill="#efebe7" stroke="#6a6a6a" stroke-width="1.2"/></svg><svg class="a" style="left:2458px;top:1198px" width="12" height="12" viewBox="0 0 12 12"><rect x="0.7" y="0.7" width="10.6" height="10.6" rx="2.5" fill="none" stroke="#6a6a6a" stroke-width="1.3"/><path d="M3 3L9 9M9 3L3 9" stroke="#6a6a6a" stroke-width="2"/></svg><div id="console" class="a"><div class="row" style="top:0px;background:#f6f5f3"><div class="ctext" style="letter-spacing:0.89px">[18:11:19] [LoD][pass 2] Level 3: 73 cells (+0)</div></div><div class="row" style="top:17px;background:#ffffff"><div class="ctext" style="letter-spacing:0.89px">[18:11:19] [LoD][pass 2] Level 4: 240 cells (+2)</div></div><div class="row" style="top:34px;background:#f6f5f3"><div class="ctext" style="letter-spacing:0.89px">[18:11:19] [LoD][pass 2] Level 5: 791 cells (+80)</div></div><div class="row" style="top:51px;background:#ffffff"><div class="ctext" style="letter-spacing:0.89px">[18:11:19] [LoD][pass 2] Level 6: 3120 cells (+376)</div></div><div class="row" style="top:68px;background:#f6f5f3"><div class="ctext" style="letter-spacing:0.89px">[18:11:19] [LoD][pass 2] Level 7: 12091 cells (+2030)</div></div><div class="row" style="top:85px;background:#ffffff"><div class="ctext" style="letter-spacing:0.89px">[18:11:19] [LoD][pass 2] Level 8: 45329 cells (+11936)</div></div><div class="row" style="top:102px;background:#f6f5f3"><div class="ctext" style="letter-spacing:0.89px">[18:11:19] [LoD][pass 2] Level 9: 167659 cells (+65034)</div></div><div class="row" style="top:119px;background:#ffffff"><div class="ctext" style="letter-spacing:0.89px">[18:11:19] [LoD][pass 2] Level 10: 560448 cells (+363962)</div></div><div class="row" style="top:136px;background:#f6f5f3"><div class="ctext" style="letter-spacing:0.89px">[18:11:19] [LoD] Acceleration structure ready for cloud &#39;pointcloud_map&#39; (max level: 12 / mem. = 55.71 Mb / duration: 3.9 s.)</div></div><div class="a" style="left:2396px;top:0;width:14px;height:164px;background:linear-gradient(90deg,#fff,#efedeb);border-left:1px solid #b8b4b0"></div><div class="a" style="left:2396px;top:13px;width:14px;height:111px;background:#e2e0de;border:1px solid #b8b4b0;border-right:none"></div><div class="a" style="left:2396px;top:150px;width:14px;height:1px;background:#b8b4b0"></div><svg class="a" style="left:2397px;top:0" width="13" height="164"><path d="M3 9H10L6.5 5.5Z" fill="#555"/><path d="M3 157H10L6.5 161Z" fill="#555"/></svg></div><svg class="a" style="left:0;top:0;z-index:20" width="2560" height="1420"><path d="M190 330V145" stroke="#e01b24" stroke-width="4"/><path d="M190 132L180.5 150H199.5Z" fill="#e01b24"/><path d="M570.5 239.5L390 61" stroke="#e01b24" stroke-width="4"/><path d="M380.5 50.5L400.4 57.1L387.1 70.4Z" fill="#e01b24"/></svg><svg class="a" style="left:170px;top:345px;z-index:20" width="30" height="48" viewBox="170 345 30 48"><path d="M189.3 351 L193.8 351 L193.8 387.3 L189.3 387.3 L189.3 358.5 Q186 362 180.4 363 L180.4 359.5 Q186.5 357.5 189.3 351Z" fill="#e01b24"/></svg><div class="a" style="left:565px;top:253px;font-size:53px;color:#e01b24;z-index:20;line-height:1">2</div></body></html>
